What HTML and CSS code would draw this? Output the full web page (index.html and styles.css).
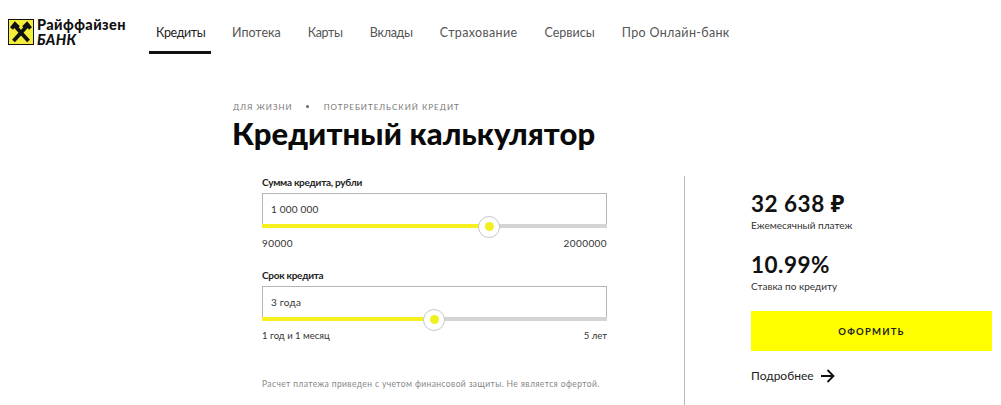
FILE: index.html
```html
<!DOCTYPE html>
<html lang="ru">
<head>
<meta charset="utf-8">
<title>Кредитный калькулятор</title>
<link rel="stylesheet" href="styles.css">
</head>
<body>
<header class="header">
  <a class="logo">
    <svg class="logo-mark" viewBox="0 0 26 26" width="26" height="26">
      <rect width="26" height="26" fill="#111"/>
      <rect x="1" y="1" width="24" height="24" fill="#f4ee3a"/>
      <g fill="none" stroke="#111" stroke-width="3.8">
        <path d="M5.5 22 L19 7"/>
        <path d="M20.5 22 L7 7"/>
        <path d="M3.5 9.5 L7 5 L10.5 8.5"/>
        <path d="M22.5 9.5 L19 5 L15.5 8.5"/>
      </g>
    </svg>
    <span class="logo-text"><span>Райффайзен</span><em>БАНК</em></span>
  </a>
  <nav class="nav">
    <a class="nav-item active">Кредиты</a>
    <a class="nav-item">Ипотека</a>
    <a class="nav-item tight">Карты</a>
    <a class="nav-item tight">Вклады</a>
    <a class="nav-item wide">Страхование</a>
    <a class="nav-item">Сервисы</a>
    <a class="nav-item wide">Про Онлайн-банк</a>
  </nav>
</header>
<main class="main">
  <div class="crumbs"><span>ДЛЯ ЖИЗНИ</span><i class="dot"></i><span>ПОТРЕБИТЕЛЬСКИЙ КРЕДИТ</span></div>
  <h1 class="title">Кредитный калькулятор</h1>
  <div class="calc">
    <section class="form">
      <div class="field">
        <label class="label">Сумма кредита, рубли</label>
        <div class="box">
          <div class="value">1 000 000</div>
          <div class="track"><div class="fill fill-sum"></div></div>
        </div>
        <div class="range"><span>90000</span><span>2000000</span></div>
      </div>
      <div class="field">
        <label class="label">Срок кредита</label>
        <div class="box">
          <div class="value">3 года</div>
          <div class="track"><div class="fill fill-term"></div></div>
        </div>
        <div class="range range-words"><span>1 год и 1 месяц</span><span>5 лет</span></div>
      </div>
      <p class="note">Расчет платежа приведен с учетом финансовой защиты. Не является офертой.</p>
    </section>
    <aside class="side">
      <div class="stat">
        <div class="stat-value">32 638 ₽</div>
        <div class="stat-label">Ежемесячный платеж</div>
      </div>
      <div class="stat">
        <div class="stat-value">10.99%</div>
        <div class="stat-label">Ставка по кредиту</div>
      </div>
      <button class="cta">ОФОРМИТЬ</button>
      <a class="more">Подробнее
        <svg viewBox="0 0 14 14" width="14" height="14" fill="none" stroke="#111" stroke-width="1.8"><path d="M0 7 H12.5 M6.5 1 L12.5 7 L6.5 13"/></svg>
      </a>
    </aside>
  </div>
</main>
</body>
</html>
```
FILE: styles.css
```css
* { box-sizing: border-box; }
html, body { margin: 0; height: 405px; overflow: hidden; }
body { background: #fff; color: #111; font-family: "Lato", "Noto Sans", sans-serif; }

.header { display: flex; align-items: flex-start; height: 54px; padding-left: 8px; }
.logo { display: flex; gap: 3px; margin-top: 19px; width: 141px; }
.logo-mark { display: block; flex: none; }
.logo-text { display: flex; flex-direction: column; font-weight: 900; font-size: 14.5px; line-height: 15px; letter-spacing: .4px; margin-top: -2px; }
.logo-text em { font-style: italic; }

.nav { display: flex; }
.nav-item { display: block; height: 54px; padding: 25px 7px 0; margin-right: 13px; font-size: 12.5px; line-height: 16px; letter-spacing: 0; color: #555; }
.nav-item.tight { letter-spacing: -.3px; }
.nav-item.wide { letter-spacing: .35px; }
.nav-item.active { width: 62px; margin-right: 14px; color: #222; letter-spacing: -.4px; border-bottom: 3px solid #111; }

.main { padding: 47px 0 0 233px; }
.crumbs { display: flex; align-items: center; height: 11px; font-size: 8px; letter-spacing: 1px; color: #777; }
.dot { width: 3px; height: 3px; background: #666; margin: 0 15px 0 13px; border-radius: 50%; }
.title { margin: 2px 0 0 -1px; font-size: 31px; line-height: 38px; font-weight: 900; color: #0a0a0a; letter-spacing: .1px; }

.calc { display: flex; margin-top: 24px; }
.form { width: 452px; padding: 0 77px 0 29px; border-right: 1px solid #b8b8b8; height: 229px; }
.field { margin-bottom: 20px; }
.label { display: block; font-size: 10px; line-height: 12px; font-weight: 700; letter-spacing: -.27px; color: #222; margin-bottom: 5px; }
.box { height: 33px; border: 1px solid #b5b5b5; border-bottom-color: transparent; position: relative; }
.value { padding: 9px 0 0 8px; font-size: 10px; line-height: 12px; letter-spacing: .2px; color: #333; }
.track { position: absolute; left: -1px; right: -1px; bottom: -3px; height: 4px; background: #d4d4d4; }
.fill { height: 100%; background: #f5f01e; position: relative; }
.fill-sum { width: 66%; }
.fill-term { width: 50%; }
.fill::after { content: ""; position: absolute; right: -10px; top: -8px; width: 20px; height: 20px; border-radius: 50%; background: #fff; border: 1px solid #c8c8c8; }
.fill::before { content: ""; position: absolute; right: -4.5px; top: -2.5px; width: 9px; height: 9px; border-radius: 50%; background: #f0f020; z-index: 1; }
.range { display: flex; justify-content: space-between; margin-top: 11px; font-size: 10px; line-height: 12px; letter-spacing: .4px; color: #333; }
.range-words { font-size: 9.5px; letter-spacing: 0; }
.note { margin: 36px 0 0; font-size: 8.5px; line-height: 12px; letter-spacing: .38px; color: #888; white-space: nowrap; }

.side { margin-left: 66px; width: 241px; padding-top: 15px; }
.stat + .stat { margin-top: 21px; }
.stat-value { font-size: 22.5px; line-height: 26px; font-weight: 700; letter-spacing: .5px; color: #111; }
.stat-label { font-size: 10px; line-height: 12px; letter-spacing: 0; color: #333; margin-top: 2px; }
.cta { display: block; width: 241px; height: 40px; margin: 19px 0 0; border: 0; background: #ff0; color: #222; font-family: inherit; font-size: 9.5px; font-weight: 700; letter-spacing: 1.2px; }
.more { display: flex; align-items: center; gap: 7px; margin-top: 17px; font-size: 12px; line-height: 16px; letter-spacing: 0; color: #222; }
```
